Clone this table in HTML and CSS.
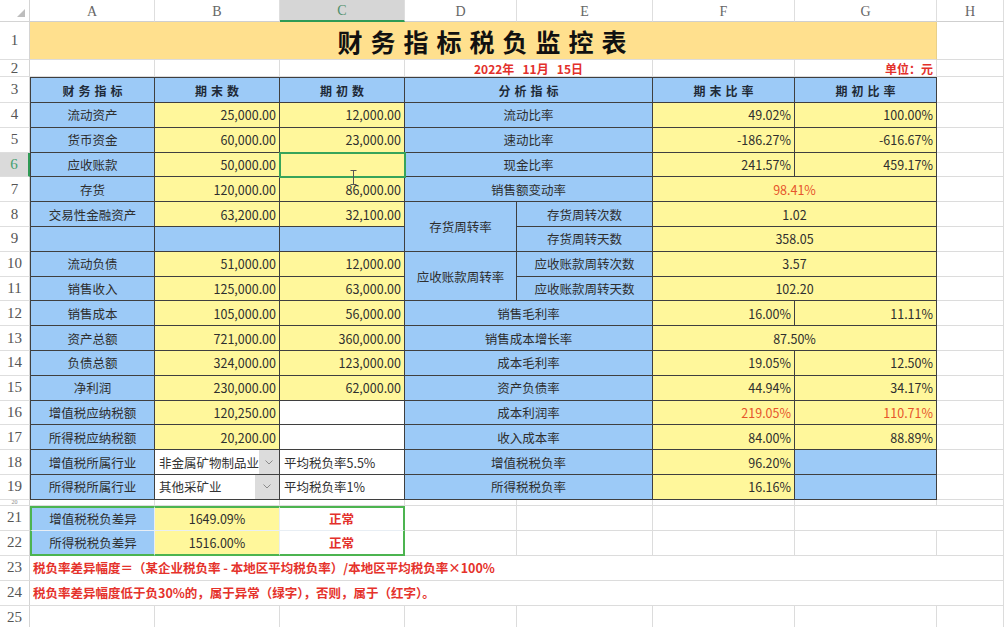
FILE: index.html
```html
<!DOCTYPE html>
<html lang="zh">
<head>
<meta charset="utf-8">
<title>财务指标税负监控表</title>
<link rel="stylesheet" href="styles.css">
</head>
<body>
<div class="sheet">
  <!-- column headers -->
  <div class="corner"><span class="tri"></span></div>
  <div class="ch">A</div>
  <div class="ch">B</div>
  <div class="ch chsel">C</div>
  <div class="ch">D</div>
  <div class="ch">E</div>
  <div class="ch">F</div>
  <div class="ch">G</div>
  <div class="ch">H</div>

  <!-- row 1 -->
  <div class="rh">1</div>
  <div class="c title s7">财务指标税负监控表</div>
  <div class="c"></div>

  <!-- row 2 -->
  <div class="rh">2</div>
  <div class="c"></div>
  <div class="c"></div>
  <div class="c"></div>
  <div class="c s2 m red date">2022年&nbsp;&nbsp;&nbsp;11月&nbsp;&nbsp;&nbsp;15日</div>
  <div class="c"></div>
  <div class="c r red date">单位：元</div>
  <div class="c"></div>

  <!-- row 3 -->
  <div class="rh">3</div>
  <div class="c t top lft b m hd">财务指标</div>
  <div class="c t top b m hd">期末数</div>
  <div class="c t top b m hd">期初数</div>
  <div class="c t top b m hd s2">分析指标</div>
  <div class="c t top b m hd">期末比率</div>
  <div class="c t top b m hd">期初比率</div>
  <div class="c"></div>

  <!-- row 4 -->
  <div class="rh">4</div>
  <div class="c t lft b m">流动资产</div>
  <div class="c t y r">25,000.00</div>
  <div class="c t y r">12,000.00</div>
  <div class="c t b m s2">流动比率</div>
  <div class="c t y r">49.02%</div>
  <div class="c t y r">100.00%</div>
  <div class="c"></div>

  <!-- row 5 -->
  <div class="rh">5</div>
  <div class="c t lft b m">货币资金</div>
  <div class="c t y r">60,000.00</div>
  <div class="c t y r">23,000.00</div>
  <div class="c t b m s2">速动比率</div>
  <div class="c t y r">-186.27%</div>
  <div class="c t y r">-616.67%</div>
  <div class="c"></div>

  <!-- row 6 -->
  <div class="rh rhsel">6</div>
  <div class="c t lft b m">应收账款</div>
  <div class="c t y r">50,000.00</div>
  <div class="c t y sel"><svg class="ibeam" width="7" height="15" viewBox="0 0 7 15"><path d="M0.5 0.5h6M3.5 0.5v14M0.5 14.5h6" stroke="#555" stroke-width="1" fill="none"/></svg></div>
  <div class="c t b m s2">现金比率</div>
  <div class="c t y r">241.57%</div>
  <div class="c t y r">459.17%</div>
  <div class="c"></div>

  <!-- row 7 -->
  <div class="rh">7</div>
  <div class="c t lft b m">存货</div>
  <div class="c t y r">120,000.00</div>
  <div class="c t y r">86,000.00</div>
  <div class="c t b m s2">销售额变动率</div>
  <div class="c t y m s2 orange">98.41%</div>
  <div class="c"></div>

  <!-- row 8 -->
  <div class="rh">8</div>
  <div class="c t lft b m">交易性金融资产</div>
  <div class="c t y r">63,200.00</div>
  <div class="c t y r">32,100.00</div>
  <div class="c t b m rs2">存货周转率</div>
  <div class="c t b m">存货周转次数</div>
  <div class="c t y m s2">1.02</div>
  <div class="c"></div>

  <!-- row 9 -->
  <div class="rh">9</div>
  <div class="c t lft b"></div>
  <div class="c t b"></div>
  <div class="c t b"></div>
  <div class="c t b m">存货周转天数</div>
  <div class="c t y m s2">358.05</div>
  <div class="c"></div>

  <!-- row 10 -->
  <div class="rh">10</div>
  <div class="c t lft b m">流动负债</div>
  <div class="c t y r">51,000.00</div>
  <div class="c t y r">12,000.00</div>
  <div class="c t b m rs2">应收账款周转率</div>
  <div class="c t b m">应收账款周转次数</div>
  <div class="c t y m s2">3.57</div>
  <div class="c"></div>

  <!-- row 11 -->
  <div class="rh">11</div>
  <div class="c t lft b m">销售收入</div>
  <div class="c t y r">125,000.00</div>
  <div class="c t y r">63,000.00</div>
  <div class="c t b m">应收账款周转天数</div>
  <div class="c t y m s2">102.20</div>
  <div class="c"></div>

  <!-- row 12 -->
  <div class="rh">12</div>
  <div class="c t lft b m">销售成本</div>
  <div class="c t y r">105,000.00</div>
  <div class="c t y r">56,000.00</div>
  <div class="c t b m s2">销售毛利率</div>
  <div class="c t y r">16.00%</div>
  <div class="c t y r">11.11%</div>
  <div class="c"></div>

  <!-- row 13 -->
  <div class="rh">13</div>
  <div class="c t lft b m">资产总额</div>
  <div class="c t y r">721,000.00</div>
  <div class="c t y r">360,000.00</div>
  <div class="c t b m s2">销售成本增长率</div>
  <div class="c t y m s2">87.50%</div>
  <div class="c"></div>

  <!-- row 14 -->
  <div class="rh">14</div>
  <div class="c t lft b m">负债总额</div>
  <div class="c t y r">324,000.00</div>
  <div class="c t y r">123,000.00</div>
  <div class="c t b m s2">成本毛利率</div>
  <div class="c t y r">19.05%</div>
  <div class="c t y r">12.50%</div>
  <div class="c"></div>

  <!-- row 15 -->
  <div class="rh">15</div>
  <div class="c t lft b m">净利润</div>
  <div class="c t y r">230,000.00</div>
  <div class="c t y r">62,000.00</div>
  <div class="c t b m s2">资产负债率</div>
  <div class="c t y r">44.94%</div>
  <div class="c t y r">34.17%</div>
  <div class="c"></div>

  <!-- row 16 -->
  <div class="rh">16</div>
  <div class="c t lft b m">增值税应纳税额</div>
  <div class="c t y r">120,250.00</div>
  <div class="c t w"></div>
  <div class="c t b m s2">成本利润率</div>
  <div class="c t y r orange">219.05%</div>
  <div class="c t y r orange">110.71%</div>
  <div class="c"></div>

  <!-- row 17 -->
  <div class="rh">17</div>
  <div class="c t lft b m">所得税应纳税额</div>
  <div class="c t y r">20,200.00</div>
  <div class="c t w"></div>
  <div class="c t b m s2">收入成本率</div>
  <div class="c t y r">84.00%</div>
  <div class="c t y r">88.89%</div>
  <div class="c"></div>

  <!-- row 18 -->
  <div class="rh">18</div>
  <div class="c t lft b m">增值税所属行业</div>
  <div class="c t w pick"><span>非金属矿物制品业</span><span class="dd"><svg width="8" height="5" viewBox="0 0 8 5"><path d="M0.5 0.5l3.5 3.5l3.5-3.5" stroke="#8a8a8a" stroke-width="1" fill="none"/></svg></span></div>
  <div class="c t w l">平均税负率5.5%</div>
  <div class="c t b m s2">增值税税负率</div>
  <div class="c t y r">96.20%</div>
  <div class="c t b"></div>
  <div class="c"></div>

  <!-- row 19 -->
  <div class="rh">19</div>
  <div class="c t lft b m">所得税所属行业</div>
  <div class="c t w pick"><span>其他采矿业</span><span class="dd"><svg width="8" height="5" viewBox="0 0 8 5"><path d="M0.5 0.5l3.5 3.5l3.5-3.5" stroke="#8a8a8a" stroke-width="1" fill="none"/></svg></span></div>
  <div class="c t w l">平均税负率1%</div>
  <div class="c t b m s2">所得税税负率</div>
  <div class="c t y r">16.16%</div>
  <div class="c t b"></div>
  <div class="c"></div>

  <!-- row 20 (collapsed) -->
  <div class="rh tiny">20</div>
  <div class="c"></div>
  <div class="c"></div>
  <div class="c"></div>
  <div class="c"></div>
  <div class="c"></div>
  <div class="c"></div>
  <div class="c"></div>
  <div class="c"></div>

  <!-- row 21 -->
  <div class="rh">21</div>
  <div class="c g b m gl gt">增值税税负差异</div>
  <div class="c g y m gt">1649.09%</div>
  <div class="c g w m gr gt red bold">正常</div>
  <div class="c"></div>
  <div class="c"></div>
  <div class="c"></div>
  <div class="c s2"></div>

  <!-- row 22 -->
  <div class="rh">22</div>
  <div class="c g b m gl gb">所得税税负差异</div>
  <div class="c g y m gb">1516.00%</div>
  <div class="c g w m gr gb red bold">正常</div>
  <div class="c"></div>
  <div class="c"></div>
  <div class="c"></div>
  <div class="c"></div>
  <div class="c"></div>

  <!-- row 23 -->
  <div class="rh">23</div>
  <div class="c s7 note">税负率差异幅度＝（某企业税负率 - 本地区平均税负率）/本地区平均税负率×100%</div>
  <div class="c"></div>

  <!-- row 24 -->
  <div class="rh">24</div>
  <div class="c s7 note">税负率差异幅度低于负30%的，属于异常（绿字），否则，属于（红字）。</div>
  <div class="c"></div>

  <!-- row 25 -->
  <div class="rh">25</div>
  <div class="c"></div>
  <div class="c"></div>
  <div class="c"></div>
  <div class="c"></div>
  <div class="c"></div>
  <div class="c"></div>
  <div class="c"></div>
  <div class="c"></div>
</div>
</body>
</html>
```

FILE: styles.css
```css
* {
  box-sizing: border-box;
  margin: 0;
  padding: 0;
}

html, body {
  width: 1004px;
  height: 627px;
  overflow: hidden;
  background: #ffffff;
}

body {
  margin: 0;
  font-family: "Noto Sans CJK SC", "Noto Sans", sans-serif;
  font-size: 12.5px;
  color: #2e2e2e;
}

.sheet {
  display: grid;
  grid-template-columns: 30px 125px 125px 125px 112px 136px 142px 142px 67px;
  grid-template-rows: 22px 38px 17px 26px repeat(16, 24.8px) 6px repeat(5, 25px);
}

/* headers */
.corner {
  position: relative;
  border-right: 1px solid #d4d4d4;
  border-bottom: 1px solid #d4d4d4;
}

.tri {
  position: absolute;
  right: 4px;
  bottom: 4px;
  width: 0;
  height: 0;
  border-left: 8px solid transparent;
  border-bottom: 8px solid #bdbdbd;
}

.ch {
  display: flex;
  align-items: center;
  justify-content: center;
  font-family: "Liberation Serif", "DejaVu Serif", serif;
  font-size: 14px;
  color: #666666;
  border-right: 1px solid #dedede;
  border-bottom: 1px solid #cfcfcf;
  padding-top: 2px;
}

.chsel {
  background: #d6d6d6;
  color: #4f8f6a;
  border-bottom: 2px solid #2f9a55;
}

.rh {
  display: flex;
  align-items: center;
  justify-content: center;
  font-family: "Liberation Serif", "DejaVu Serif", serif;
  font-size: 15px;
  color: #555555;
  border-right: 1px solid #d4d4d4;
  border-bottom: 1px solid #dedede;
  overflow: hidden;
}

.rhsel {
  background: #dadada;
  color: #45a070;
  border-right: 2px solid #2f9a55;
}

.tiny {
  font-size: 6px;
  line-height: 6px;
  color: #888888;
}

/* cells */
.c {
  display: flex;
  align-items: center;
  white-space: nowrap;
  overflow: hidden;
  padding: 0 4px;
  border-right: 1px solid #dcdcdc;
  border-bottom: 1px solid #dcdcdc;
}

.t {
  border-right: 1px solid #3f3f3f;
  border-bottom: 1px solid #3f3f3f;
}

.top {
  border-top: 1px solid #3f3f3f;
}

.lft {
  border-left: 1px solid #3f3f3f;
}

.s2 { grid-column: span 2; }
.s7 { grid-column: span 7; }
.rs2 { grid-row: span 2; }

.b { background: #9ccaf7; }
.y { background: #fff79b; }
.w { background: #ffffff; }

.m { justify-content: center; }
.r { justify-content: flex-end; padding-right: 3px; }
.l { justify-content: flex-start; }

.title {
  background: #ffe08e;
  justify-content: center;
  font-size: 25px;
  font-weight: 700;
  color: #111111;
  letter-spacing: 8px;
  padding-left: 10px;
  border-right: 1px solid #e8d08a;
}

.date {
  font-size: 12px;
  font-weight: 700;
  color: #e3302b;
}

.hd {
  font-size: 12px;
  font-weight: 700;
  letter-spacing: 4px;
  padding-left: 8px;
  color: #1f2a38;
}

.red { color: #e3302b; }
.bold { font-weight: 700; }
.orange { color: #e6552b; }

/* selected cell */
.sel {
  position: relative;
  outline: 2px solid #37a45a;
  outline-offset: -1px;
  overflow: visible;
  z-index: 1;
}

.ibeam {
  position: absolute;
  left: 70px;
  top: 17px;
}

/* dropdown cells */
.pick {
  justify-content: space-between;
  padding-right: 0;
  color: #333333;
}

.dd {
  display: flex;
  align-items: center;
  justify-content: center;
  width: 24px;
  height: 100%;
  background: #dcdcdc;
}

/* green framed block */
.g {
  border-right: 1px solid #e8eef4;
  border-bottom: 1px solid #e8eef4;
}

.gl { border-left: 2px solid #4cb450; }
.gr { border-right: 2px solid #4cb450; }
.gt { border-top: 2px solid #4cb450; }
.gb { border-bottom: 2px solid #4cb450; }

.note {
  font-size: 12.5px;
  font-weight: 700;
  color: #e5322b;
  padding-left: 3px;
  border-right: none;
}
```
